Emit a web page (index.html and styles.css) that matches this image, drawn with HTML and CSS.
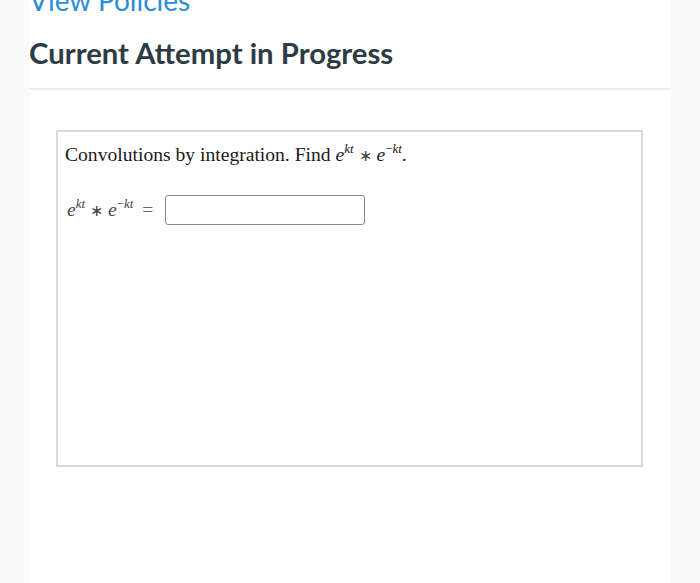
FILE: index.html
```html
<!DOCTYPE html>
<html>
<head>
<meta charset="utf-8">
<link rel="stylesheet" href="styles.css">
</head>
<body>
<div class="page">
  <a class="policies" href="#">View Policies</a>
  <h1 class="title">Current Attempt in Progress</h1>
  <div class="rule"></div>
  <div class="question">
    <p class="prompt">Convolutions by integration. Find <span class="m"><i>e</i><sup><i>kt</i></sup> <span class="op">∗</span> <i>e</i><sup>−<i>kt</i></sup></span>.</p>
    <div class="answer">
      <span class="m"><i>e</i><sup><i>kt</i></sup> <span class="op">∗</span> <i>e</i><sup>−<i>kt</i></sup></span>
      <span class="eq">=</span>
      <span class="input"></span>
    </div>
  </div>
</div>
</body>
</html>
```
FILE: styles.css
```css
html, body {
  margin: 0;
  padding: 0;
  background: #fafafa;
}
.page {
  margin-left: 29px;
  width: 642px;
  min-height: 583px;
  background: #ffffff;
  overflow: hidden;
}
.policies {
  display: block;
  font-family: Lato, sans-serif;
  font-size: 28px;
  line-height: 28px;
  color: #2b8ed6;
  text-decoration: none;
  margin-top: -14px;
}
.title {
  font-family: Lato, sans-serif;
  font-weight: 700;
  font-size: 29.3px;
  line-height: 34px;
  color: #2d3b45;
  margin: 22px 0 0 0;
}
.rule {
  height: 2px;
  background: #ededed;
  margin-top: 18px;
}
.question {
  margin: 40px 0 0 27px;
  width: 583px;
  height: 333px;
  border: 2px solid #d9d9d9;
}
.prompt {
  font-family: "Liberation Serif", serif;
  font-size: 19.6px;
  line-height: 22px;
  color: #1a1a1a;
  margin: 12px 0 0 7px;
}
.m i {
  font-family: "Liberation Serif", serif;
  font-style: italic;
}
.m sup {
  font-size: 13px;
  line-height: 0;
  vertical-align: 8px;
}
.op {
  font-size: 16px;
  color: #444;
}
.answer {
  display: flex;
  align-items: center;
  margin: 28px 0 0 9px;
  font-family: "Liberation Serif", serif;
  font-size: 19.6px;
  color: #444;
}
.eq {
  margin: 0 12px 0 9px;
  color: #666;
}
.input {
  display: block;
  width: 198px;
  height: 28px;
  border: 1px solid #8a8a8a;
  border-radius: 3px;
  background: #fff;
}
```
